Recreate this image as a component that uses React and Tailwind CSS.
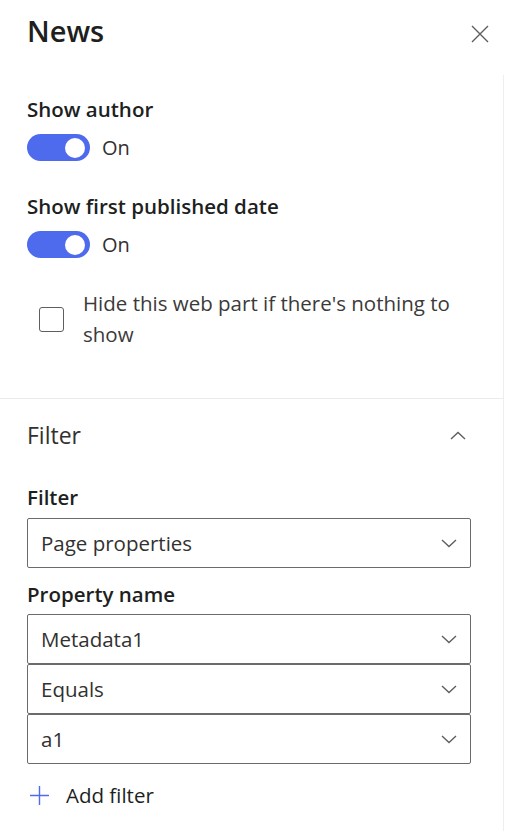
import React from 'react';

const Toggle = ({ label }) => (
  <div className="flex items-center mt-[13px]">
    <div className="w-[63px] h-[27px] rounded-full bg-[#4f6bed] flex items-center justify-end pr-[5px]">
      <div className="w-[20px] h-[20px] rounded-full bg-white" />
    </div>
    <span className="ml-[12px] text-[20px] leading-[24px] text-[#323130]">{label}</span>
  </div>
);

const Chevron = ({ up }) => (
  <svg width="16" height="9" viewBox="0 0 16 9" fill="none">
    <path
      d={up ? 'M1 8 L8 1.5 L15 8' : 'M1 1 L8 7.5 L15 1'}
      stroke="#605e5c"
      strokeWidth="1.4"
    />
  </svg>
);

const Dropdown = ({ value }) => (
  <div className="w-[444px] h-[50px] border border-[#6b6b6b] rounded-[2px] flex items-center justify-between pl-[13px] pr-[13px]">
    <span className="text-[20.5px] text-[#323130]">{value}</span>
    <Chevron />
  </div>
);

const App = () => {
  return (
    <div className="w-[506px] h-[831px] bg-white overflow-hidden font-['Open_Sans',sans-serif] text-[#201f1e]">
      {/* header */}
      <div className="h-[75px] flex items-start justify-between pl-[27px] pr-[16px] pt-[13px]">
        <h1 className="text-[29px] leading-[36px] font-semibold">News</h1>
        <svg width="20" height="20" viewBox="0 0 20 20" className="mt-[11px]">
          <path d="M2 2 L18 18 M18 2 L2 18" stroke="#605e5c" strokeWidth="1.4" />
        </svg>
      </div>

      <div className="w-[504px] h-[756px] border-r border-[#eeeeee]">
        {/* display settings */}
        <div className="px-[27px] pt-[22px] pb-[48px]">
          <div className="text-[20.5px] leading-[24px] font-semibold">Show author</div>
          <Toggle label="On" />
          <div className="mt-[33px] text-[20.5px] leading-[24px] font-semibold">Show first published date</div>
          <Toggle label="On" />
          <div className="mt-[30px] flex items-start pl-[12px]">
            <div className="mt-[19px] w-[25px] h-[25px] shrink-0 border-[1.5px] border-[#605e5c] rounded-[3px]" />
            <div className="ml-[19px] text-[20.5px] leading-[31px] text-[#3b3a39]">
              Hide this web part if there's nothing to show
            </div>
          </div>
        </div>

        <div className="border-t border-[#edebe9]" />

        {/* filter section */}
        <div className="px-[27px] pt-[21px]">
          <div className="flex items-center justify-between pr-[10px]">
            <span className="text-[23px] leading-[30px] text-[#323130]">Filter</span>
            <Chevron up />
          </div>
          <div className="mt-[35px] text-[20.5px] leading-[24px] font-semibold">Filter</div>
          <div className="mt-[9px]">
            <Dropdown value="Page properties" />
          </div>
          <div className="mt-[14px] text-[20.5px] leading-[24px] font-semibold">Property name</div>
          <div className="mt-[8px] flex flex-col">
            <Dropdown value="Metadata1" />
            <Dropdown value="Equals" />
            <Dropdown value="a1" />
          </div>
          <div className="mt-[19px] flex items-center pl-[2px]">
            <svg width="21" height="21" viewBox="0 0 21 21">
              <path d="M10.5 1 V20 M1 10.5 H20" stroke="#4f6bed" strokeWidth="1.4" />
            </svg>
            <span className="ml-[16px] text-[20.5px] leading-[24px] text-[#201f1e]">Add filter</span>
          </div>
        </div>
      </div>
    </div>
  );
};

export default App;
